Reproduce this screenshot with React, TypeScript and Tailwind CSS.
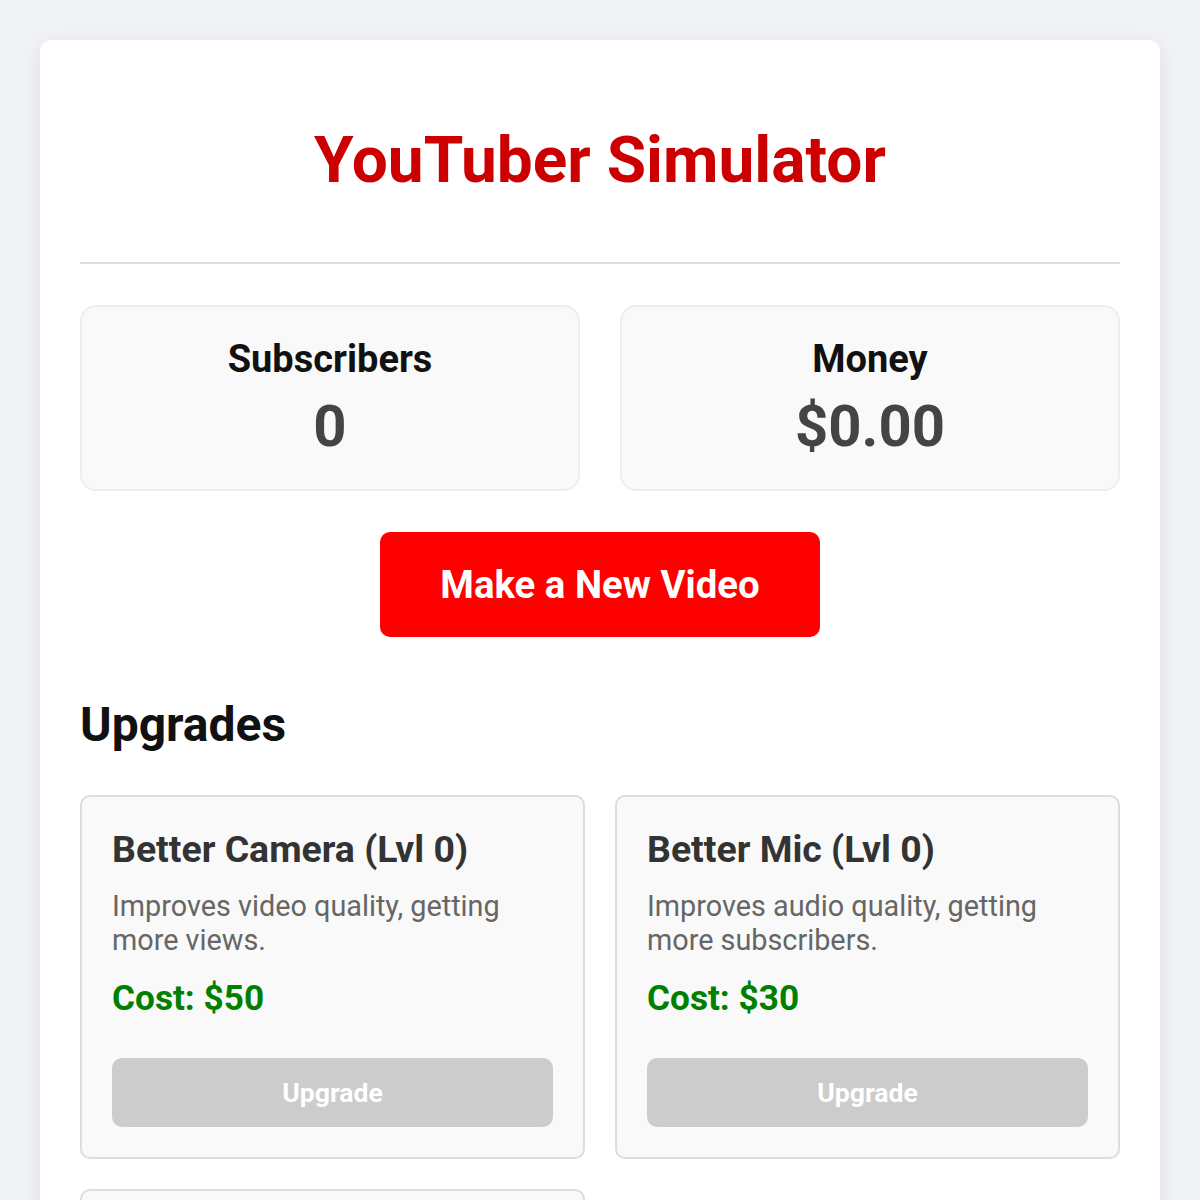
import React from 'react';

interface Upgrade {
  name: string;
  level: number;
  description: string;
  cost: number;
}

const upgrades: Upgrade[] = [
  { name: 'Better Camera', level: 0, description: 'Improves video quality, getting more views.', cost: 50 },
  { name: 'Better Mic', level: 0, description: 'Improves audio quality, getting more subscribers.', cost: 30 },
  { name: 'Better Editing', level: 0, description: 'Makes videos more engaging for viewers.', cost: 100 },
];

function StatBox({ label, value }: { label: string; value: string }) {
  return (
    <div className="flex flex-col items-center rounded-2xl border-2 border-[#eeeeee] bg-[#f9f9f9] pt-[30px] pb-[30px]">
      <h3 className="text-[38px] leading-[44px] font-bold text-[#111111]">{label}</h3>
      <p className="mt-[12px] text-[58px] leading-[66px] font-bold text-[#444444]">{value}</p>
    </div>
  );
}

function UpgradeCard({ upgrade }: { upgrade: Upgrade }) {
  return (
    <div className="flex flex-col rounded-[10px] border-2 border-[#dddddd] bg-[#f9f9f9] p-[30px]">
      <h3 className="text-[37.44px] leading-[44px] font-bold text-[#333333]">
        {upgrade.name} (Lvl {upgrade.level})
      </h3>
      <p className="mt-[18px] text-[28.8px] leading-[34px] text-[#666666]">{upgrade.description}</p>
      <p className="mt-[20px] text-[35.2px] leading-[42px] font-bold text-[#008000]">Cost: ${upgrade.cost}</p>
      <button
        disabled
        className="mt-[39px] h-[69px] w-full rounded-[10px] bg-[#cccccc] text-[26.6px] font-bold text-white"
      >
        Upgrade
      </button>
    </div>
  );
}

export default function App() {
  return (
    <div className="min-h-screen bg-[#f0f2f5] p-[40px] font-['Roboto',sans-serif]">
      <div className="rounded-xl bg-white px-[40px] pt-[40px] pb-[40px] shadow-[0_4px_20px_rgba(0,0,0,0.08)]">
        <header className="border-b-2 border-[#dddddd] pt-[43px] pb-[64px]">
          <h1 className="text-center text-[64px] leading-[75px] font-bold text-[#cc0000]">YouTuber Simulator</h1>
        </header>

        <div className="mt-[41px] grid grid-cols-2 gap-[40px]">
          <StatBox label="Subscribers" value="0" />
          <StatBox label="Money" value="$0.00" />
        </div>

        <div className="mt-[41px] flex justify-center">
          <button className="h-[105px] w-[440px] rounded-[10px] bg-[#ff0000] text-[38.4px] font-bold text-white">
            Make a New Video
          </button>
        </div>

        <h2 className="mt-[60px] text-[48px] leading-[56px] font-bold text-[#111111]">Upgrades</h2>

        <div className="mt-[42px] grid grid-cols-2 gap-[30px]">
          {upgrades.map((u) => (
            <UpgradeCard key={u.name} upgrade={u} />
          ))}
        </div>
      </div>
    </div>
  );
}
